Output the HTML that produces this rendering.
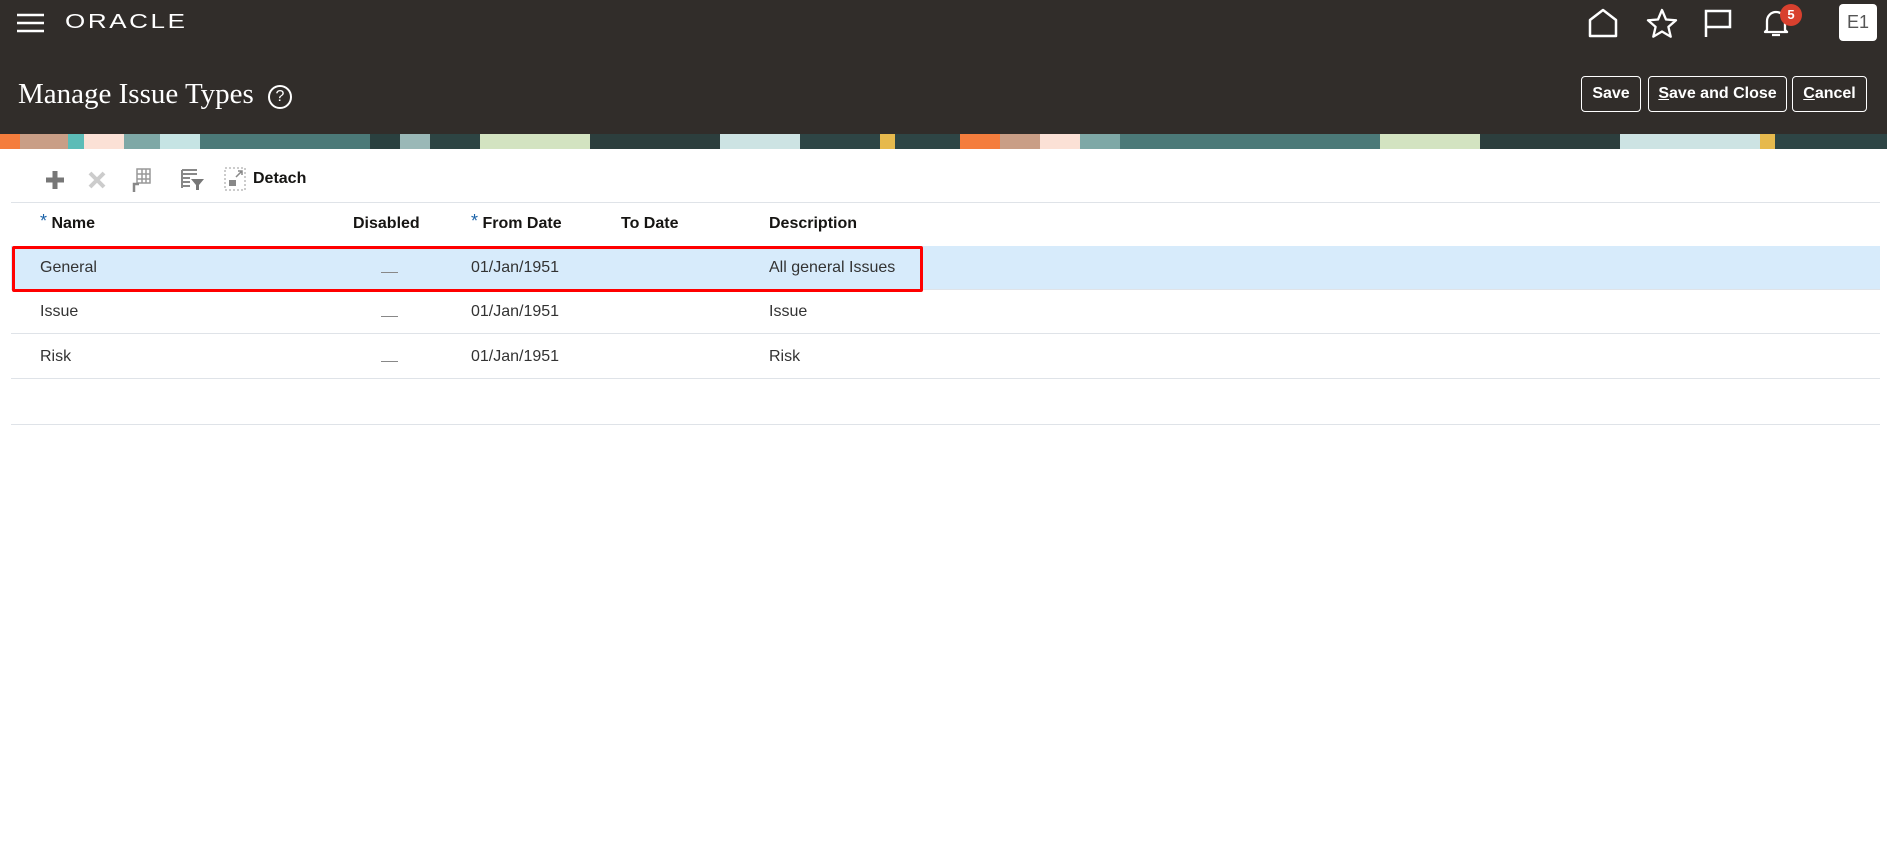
<!DOCTYPE html>
<html><head><meta charset="utf-8"><style>
*{margin:0;padding:0;box-sizing:border-box}
body{width:1887px;height:851px;background:#fff;font-family:"Liberation Sans",Arial,sans-serif;position:relative;overflow:hidden}
.hdr{position:absolute;left:0;top:0;width:1887px;height:134px;background:#312d2a}
.ab{position:absolute}
.banner{position:absolute;left:0;top:134px;width:1887px;height:15px;background:linear-gradient(90deg,#f47d3d 0,#f47d3d 20px,#c99e86 20px,#c99e86 68px,#5cbcb7 68px,#5cbcb7 84px,#fbe1d6 84px,#fbe1d6 124px,#7ea8a6 124px,#7ea8a6 160px,#c6e4e4 160px,#c6e4e4 200px,#4b7978 200px,#4b7978 370px,#2a403f 370px,#2a403f 400px,#9ab8b7 400px,#9ab8b7 430px,#2d4443 430px,#2d4443 480px,#d3e3c1 480px,#d3e3c1 590px,#2c3e3d 590px,#2c3e3d 720px,#cde3e3 720px,#cde3e3 800px,#2e4545 800px,#2e4545 880px,#e6b94d 880px,#e6b94d 895px,#2e4545 895px,#2e4545 960px,#f47d3d 960px,#f47d3d 1000px,#c99e86 1000px,#c99e86 1040px,#fbe1d6 1040px,#fbe1d6 1080px,#7ea8a6 1080px,#7ea8a6 1120px,#4b7978 1120px,#4b7978 1380px,#d3e3c1 1380px,#d3e3c1 1480px,#2c3e3d 1480px,#2c3e3d 1620px,#cde3e3 1620px,#cde3e3 1760px,#e6b94d 1760px,#e6b94d 1775px,#2e4545 1775px)}
.btn{position:absolute;top:76px;height:36px;border:1px solid #fff;border-radius:4px;color:#fff;font-weight:bold;font-size:16px;line-height:34px;text-align:center}
.th{position:absolute;top:214px;font-weight:bold;font-size:16px;color:#161513;line-height:20px}
.th b{color:#1a62a8;font-weight:normal;font-size:18px;line-height:16px;display:inline-block;vertical-align:top;margin-top:-1px}
.td{position:absolute;font-size:16px;color:#333}
.line{position:absolute;left:11px;width:1869px;height:1px;background:#dfe3e8}
.dash{position:absolute;left:381px;width:17px;height:1px;background:#888}
</style></head><body>
<div class="hdr"></div>
<svg class="ab" style="left:17px;top:13px" width="27" height="20"><path d="M0 2h27M0 10h27M0 18h27" stroke="#fff" stroke-width="2.5"/></svg>
<div class="ab" style="left:65px;top:12px;color:#fff;font-size:20px;line-height:20px;letter-spacing:2px;transform:scaleX(1.3);transform-origin:left">ORACLE</div>
<div class="ab" style="left:18px;top:78px;color:#fff;font-family:'Liberation Serif',serif;font-size:29px">Manage Issue Types</div>
<div class="ab" style="left:268px;top:85px;width:24px;height:24px;border:2px solid #fff;border-radius:50%;color:#fff;font-size:16px;text-align:center;line-height:20px">?</div>
<svg class="ab" style="left:1586px;top:7px" width="34" height="32"><path d="M4 29V13L17 3l13 10v16z" fill="none" stroke="#fff" stroke-width="2.5" stroke-linejoin="round"/></svg>
<svg class="ab" style="left:1646px;top:8px" width="32" height="30"><path d="M16 2l4 9.5 10 .8-7.6 6.6 2.3 9.8L16 23.5l-8.7 5.2 2.3-9.8L2 12.3l10-.8z" fill="none" stroke="#fff" stroke-width="2.3" stroke-linejoin="round"/></svg>
<svg class="ab" style="left:1703px;top:8px" width="30" height="30"><path d="M3 29V3h24v16H3" fill="none" stroke="#fff" stroke-width="2.5"/></svg>
<svg class="ab" style="left:1763px;top:8px" width="26" height="30"><path d="M4 22V13a9 9 0 0 1 18 0v9l2 2H2z M9 27h8" fill="none" stroke="#fff" stroke-width="2.3" stroke-linejoin="round"/></svg>
<div class="ab" style="left:1780px;top:4px;width:22px;height:22px;border-radius:50%;background:#d8402e;color:#fff;font-size:13px;font-weight:bold;text-align:center;line-height:22px">5</div>
<div class="ab" style="left:1839px;top:4px;width:38px;height:37px;border-radius:4px;background:#fff;color:#555;font-size:18px;text-align:center;line-height:37px">E1</div>
<div class="btn" style="left:1581px;width:60px">Save</div>
<div class="btn" style="left:1648px;width:139px"><u>S</u>ave and Close</div>
<div class="btn" style="left:1792px;width:75px"><u>C</u>ancel</div>
<div class="banner"></div>
<svg class="ab" style="left:45px;top:170px" width="20" height="20"><path d="M10 1v18M1 10h18" stroke="#777" stroke-width="5"/></svg>
<svg class="ab" style="left:88px;top:171px" width="18" height="18"><path d="M2 2l14 14M16 2L2 16" stroke="#ccc" stroke-width="4"/></svg>
<svg class="ab" style="left:130px;top:167px" width="22" height="26"><path d="M7 2h13v14H7zM7 7h13M7 12h13M12 2v14M16 2v14" fill="none" stroke="#999" stroke-width="1.5"/><path d="M4 25v-8h5" fill="none" stroke="#888" stroke-width="2.5"/></svg>
<svg class="ab" style="left:181px;top:169px" width="24" height="22"><path d="M1 1h15M1 5h15M1 9h8M1 13h8M1 17h8M1 1v18" stroke="#888" stroke-width="2"/><path d="M10 10h13l-5 6v5h-3v-5z" fill="#777"/></svg>
<svg class="ab" style="left:224px;top:167px" width="22" height="24"><rect x="1" y="1" width="20" height="22" fill="none" stroke="#999" stroke-dasharray="2 2"/><rect x="5" y="13" width="7" height="6" fill="#888"/><path d="M12 10l6-6M14 4h4v4" stroke="#888" stroke-width="1.5" fill="none"/></svg>
<div class="ab" style="left:253px;top:170px;font-weight:bold;font-size:16px;color:#161513">Detach</div>
<div class="line" style="top:202px"></div>
<div class="th" style="left:40px"><b>*</b> Name</div>
<div class="th" style="left:353px">Disabled</div>
<div class="th" style="left:471px"><b>*</b> From Date</div>
<div class="th" style="left:621px">To Date</div>
<div class="th" style="left:769px">Description</div>
<div class="ab" style="left:11px;top:246px;width:1869px;height:43px;background:#d7ebfb"></div>
<div class="line" style="top:289px"></div>
<div class="line" style="top:333px"></div>
<div class="line" style="top:378px"></div>
<div class="line" style="top:424px"></div>
<div class="ab" style="left:12px;top:246px;width:911px;height:46px;border:3px solid #f00;border-radius:2px"></div>
<div class="td" style="left:40px;top:259px">General</div><div class="dash" style="top:272px"></div><div class="td" style="left:471px;top:259px">01/Jan/1951</div><div class="td" style="left:769px;top:259px">All general Issues</div>
<div class="td" style="left:40px;top:303px">Issue</div><div class="dash" style="top:316px"></div><div class="td" style="left:471px;top:303px">01/Jan/1951</div><div class="td" style="left:769px;top:303px">Issue</div>
<div class="td" style="left:40px;top:348px">Risk</div><div class="dash" style="top:361px"></div><div class="td" style="left:471px;top:348px">01/Jan/1951</div><div class="td" style="left:769px;top:348px">Risk</div>
</body></html>
